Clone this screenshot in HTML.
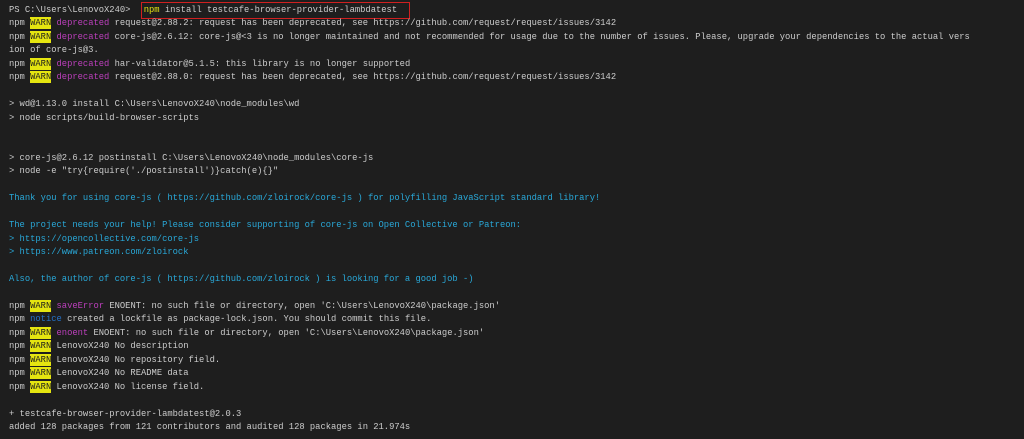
<!DOCTYPE html>
<html><head><meta charset="utf-8"><style>
html,body{margin:0;padding:0;background:#1e1e1e;width:1024px;height:439px;overflow:hidden}
pre{margin:0;position:absolute;left:9px;top:4px;font-family:"Liberation Mono",monospace;font-size:8.8px;line-height:13.45px;color:#cccccc;white-space:pre}
.w{background:#e5e510;color:#1e1e1e;padding:1px 0}
.m{color:#bc3fbc}
.b{color:#2472c8}
.c{color:#29a8d8}
.y{color:#e5e510}
.box{position:absolute;left:141px;top:2px;width:267px;height:15px;border:1px solid #d02020}
.cmd{margin-left:8px}
</style></head><body>
<div class="box"></div>
<pre>PS C:\Users\LenovoX240> <span class="cmd"><span class="y">npm</span> install testcafe-browser-provider-lambdatest</span>
npm <span class="w">WARN</span> <span class="m">deprecated</span> request@2.88.2: request has been deprecated, see https://github.com/request/request/issues/3142
npm <span class="w">WARN</span> <span class="m">deprecated</span> core-js@2.6.12: core-js@&lt;3 is no longer maintained and not recommended for usage due to the number of issues. Please, upgrade your dependencies to the actual vers
ion of core-js@3.
npm <span class="w">WARN</span> <span class="m">deprecated</span> har-validator@5.1.5: this library is no longer supported
npm <span class="w">WARN</span> <span class="m">deprecated</span> request@2.88.0: request has been deprecated, see https://github.com/request/request/issues/3142

> wd@1.13.0 install C:\Users\LenovoX240\node_modules\wd
> node scripts/build-browser-scripts


> core-js@2.6.12 postinstall C:\Users\LenovoX240\node_modules\core-js
> node -e "try{require('./postinstall')}catch(e){}"

<span class="c">Thank you for using core-js ( https://github.com/zloirock/core-js ) for polyfilling JavaScript standard library!</span>

<span class="c">The project needs your help! Please consider supporting of core-js on Open Collective or Patreon:</span>
<span class="c">> https://opencollective.com/core-js</span>
<span class="c">> https://www.patreon.com/zloirock</span>

<span class="c">Also, the author of core-js ( https://github.com/zloirock ) is looking for a good job -)</span>

npm <span class="w">WARN</span> <span class="m">saveError</span> ENOENT: no such file or directory, open 'C:\Users\LenovoX240\package.json'
npm <span class="b">notice</span> created a lockfile as package-lock.json. You should commit this file.
npm <span class="w">WARN</span> <span class="m">enoent</span> ENOENT: no such file or directory, open 'C:\Users\LenovoX240\package.json'
npm <span class="w">WARN</span> LenovoX240 No description
npm <span class="w">WARN</span> LenovoX240 No repository field.
npm <span class="w">WARN</span> LenovoX240 No README data
npm <span class="w">WARN</span> LenovoX240 No license field.

+ testcafe-browser-provider-lambdatest@2.0.3
added 128 packages from 121 contributors and audited 128 packages in 21.974s</pre>
</body></html>
